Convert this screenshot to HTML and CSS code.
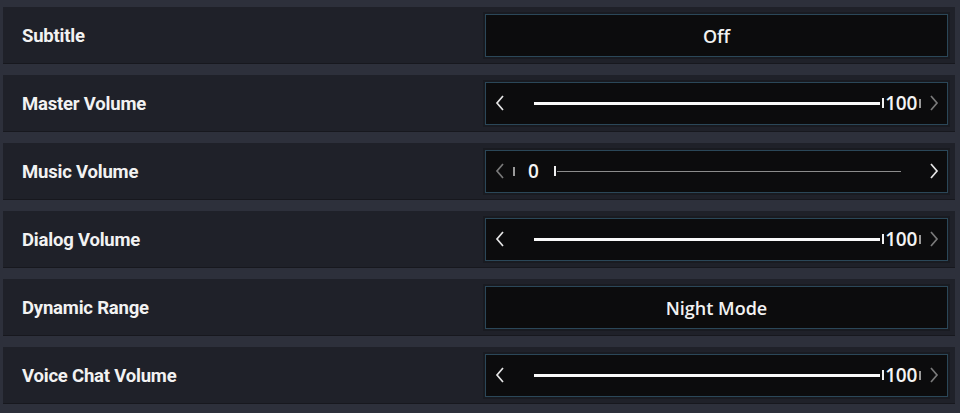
FILE: index.html
```html
<!DOCTYPE html>
<html lang="en">
<head>
  <meta charset="UTF-8">
  <title>Audio Settings</title>
  <link rel="stylesheet" href="styles.css">
</head>
<body>
<div class="settings-list">
  <div class="setting-row">
    <span class="setting-label">Subtitle</span>
    <div class="control option-box">Off</div>
  </div>

  <div class="setting-row">
    <span class="setting-label">Master Volume</span>
    <div class="control slider">
      <svg class="chev" viewBox="0 0 10 16"><path d="M8 1 L2 8 L8 15"/></svg>
      <div class="track full"></div>
      <span class="tick"></span><span class="value">100</span><span class="tick small"></span>
      <svg class="chev dim" viewBox="0 0 10 16"><path d="M2 1 L8 8 L2 15"/></svg>
    </div>
  </div>

  <div class="setting-row">
    <span class="setting-label">Music Volume</span>
    <div class="control slider">
      <svg class="chev dim" viewBox="0 0 10 16"><path d="M8 1 L2 8 L8 15"/></svg>
      <span class="tick small lead"></span><span class="value zero">0</span><span class="tick"></span>
      <div class="track empty"></div>
      <svg class="chev" viewBox="0 0 10 16"><path d="M2 1 L8 8 L2 15"/></svg>
    </div>
  </div>

  <div class="setting-row">
    <span class="setting-label">Dialog Volume</span>
    <div class="control slider">
      <svg class="chev" viewBox="0 0 10 16"><path d="M8 1 L2 8 L8 15"/></svg>
      <div class="track full"></div>
      <span class="tick"></span><span class="value">100</span><span class="tick small"></span>
      <svg class="chev dim" viewBox="0 0 10 16"><path d="M2 1 L8 8 L2 15"/></svg>
    </div>
  </div>

  <div class="setting-row">
    <span class="setting-label">Dynamic Range</span>
    <div class="control option-box">Night Mode</div>
  </div>

  <div class="setting-row">
    <span class="setting-label">Voice Chat Volume</span>
    <div class="control slider">
      <svg class="chev" viewBox="0 0 10 16"><path d="M8 1 L2 8 L8 15"/></svg>
      <div class="track full"></div>
      <span class="tick"></span><span class="value">100</span><span class="tick small"></span>
      <svg class="chev dim" viewBox="0 0 10 16"><path d="M2 1 L8 8 L2 15"/></svg>
    </div>
  </div>
</div>
</body>
</html>
```

FILE: styles.css
```css
body {
  margin: 0;
  background: #2d303b;
  font-family: Roboto, "Liberation Sans", sans-serif;
  color: #f2f2f2;
}
.settings-list {
  display: flex;
  flex-direction: column;
  gap: 11px;
  padding: 7px 5px 0 3px;
}
.setting-row {
  height: 57px;
  display: flex;
  align-items: center;
  justify-content: space-between;
  background: #1f2129;
  border-bottom: 1px solid #17181e;
  box-sizing: border-box;
  padding: 0 7px 0 19px;
}
.setting-label {
  font-size: 18.5px;
  font-weight: 700;
  letter-spacing: -0.2px;
  padding-top: 2px;
}
.control {
  width: 463px;
  height: 43px;
  box-sizing: border-box;
  background: #0c0c0d;
  border: 1px solid #2b4758;
  box-shadow: 0 0 0 2px #191b21;
}
.option-box {
  display: flex;
  align-items: center;
  justify-content: center;
  font-family: "Open Sans", sans-serif;
  font-size: 18px;
  font-weight: 600;
  padding-top: 1px;
}
.slider {
  display: flex;
  align-items: center;
  padding: 0 8px 0 9px;
  font-family: "Open Sans", sans-serif;
}
.chev {
  width: 10px;
  height: 16px;
  flex: none;
}
.chev path {
  fill: none;
  stroke: #e6e6e6;
  stroke-width: 1.7;
}
.chev.dim path {
  stroke: #7a7a7a;
}
.track {
  flex: 1;
}
.track.full {
  height: 3px;
  background: #fafafa;
  margin-left: 29px;
}
.track.empty {
  height: 1px;
  background: #8c8c8c;
  margin-right: 28px;
}
.tick {
  width: 2px;
  height: 10px;
  background: #f0f0f0;
  flex: none;
  margin: 0 1px 0 2px;
}
.tick.small {
  height: 9px;
  background: #9a9a9a;
  margin: 0 8px 0 2px;
}
.tick.lead {
  margin: 0 0 0 8px;
}
.value {
  font-size: 19px;
  font-weight: 600;
  color: #f4f4f4;
  letter-spacing: -0.3px;
}
.value.zero {
  margin: 0 13px 0 13px;
}
```
